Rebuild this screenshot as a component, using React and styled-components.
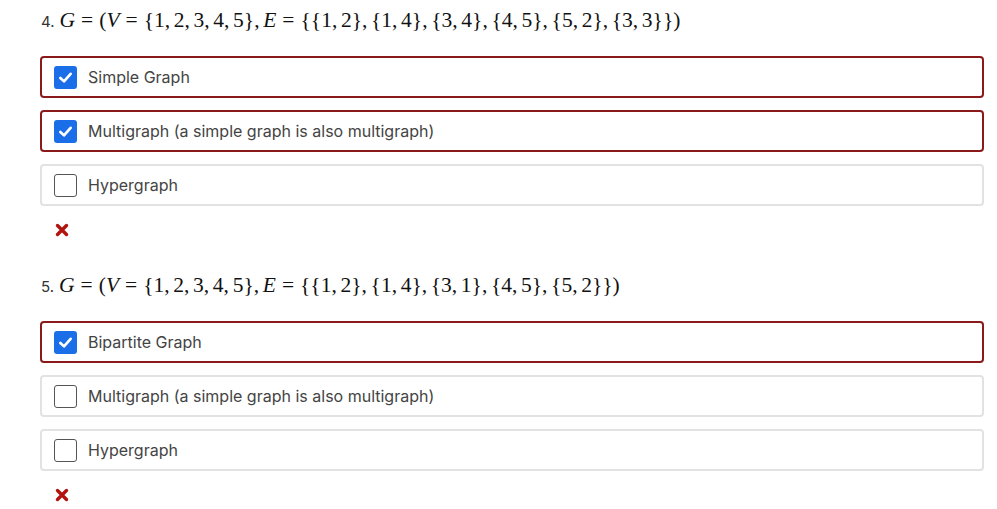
import React from 'react';
import styled, { createGlobalStyle } from 'styled-components';

const GlobalStyle = createGlobalStyle`
    body {
        margin: 0;
        background: #ffffff;
        font-family: 'Inter', 'Liberation Sans', sans-serif;
    }
`;

const questions = [
    {
        number: 4,
        edges: [[1, 2], [1, 4], [3, 4], [4, 5], [5, 2], [3, 3]],
        options: [
            { label: 'Simple Graph', checked: true },
            { label: 'Multigraph (a simple graph is also multigraph)', checked: true },
            { label: 'Hypergraph', checked: false },
        ],
    },
    {
        number: 5,
        edges: [[1, 2], [1, 4], [3, 1], [4, 5], [5, 2]],
        options: [
            { label: 'Bipartite Graph', checked: true },
            { label: 'Multigraph (a simple graph is also multigraph)', checked: false },
            { label: 'Hypergraph', checked: false },
        ],
    },
];

const Set = ({ items }) => (
    <>
        <Mo>{'{'}</Mo>
        {items.map((n, i) => (
            <React.Fragment key={i}>
                {n}
                {i < items.length - 1 && <Comma>,</Comma>}
            </React.Fragment>
        ))}
        <Mo>{'}'}</Mo>
    </>
);

const Formula = ({ edges }) => (
    <Math>
        <Mi>G</Mi>
        <Rel>=</Rel>
        (<Mi>V</Mi>
        <Rel>=</Rel>
        <Set items={[1, 2, 3, 4, 5]} />
        <Comma>,</Comma>
        <Mi>E</Mi>
        <Rel>=</Rel>
        {'{'}
        {edges.map((e, i) => (
            <React.Fragment key={i}>
                <Set items={e} />
                {i < edges.length - 1 && <Comma>,</Comma>}
            </React.Fragment>
        ))}
        {'}'})
    </Math>
);

const CheckIcon = () => (
    <svg width='15' height='15' viewBox='0 0 14 14'>
        <path d='M2.2 7.4 L5.6 10.6 L11.8 3.6' fill='none' stroke='#fff' strokeWidth='2.5' strokeLinecap='round' strokeLinejoin='round' />
    </svg>
);

const WrongIcon = () => (
    <svg width='14' height='14' viewBox='0 0 14 14'>
        <path d='M2.5 2.5 L11.5 11.5 M11.5 2.5 L2.5 11.5' stroke='#b3130f' strokeWidth='3.4' strokeLinecap='round' />
    </svg>
);

const App = () => {
    return (
        <Page>
            <GlobalStyle />
            {questions.map((q) => (
                <Question key={q.number}>
                    <Title>
                        <Num>{q.number}.</Num>
                        <Formula edges={q.edges} />
                    </Title>
                    <Options>
                        {q.options.map((o, i) => (
                            <Option key={i} $checked={o.checked}>
                                <Box $checked={o.checked}>{o.checked && <CheckIcon />}</Box>
                                <Label>{o.label}</Label>
                            </Option>
                        ))}
                    </Options>
                    <Feedback>
                        <WrongIcon />
                    </Feedback>
                </Question>
            ))}
        </Page>
    );
};

export default App;

const Page = styled.div`
    padding: 4px 13px 0 40px;
    width: 944px;
`;

const Question = styled.div`
    margin-bottom: 29px;
`;

const Title = styled.div`
    display: flex;
    align-items: baseline;
    height: 32px;
    line-height: 32px;
    margin-bottom: 20px;
    color: #222;
`;

const Num = styled.span`
    font-family: 'Inter', 'Liberation Sans', sans-serif;
    font-size: 15px;
    color: #333;
    margin-left: 1px;
    margin-right: 5px;
`;

const Math = styled.span`
    font-family: 'Liberation Serif', 'DejaVu Serif', serif;
    font-size: 21.5px;
    color: #111;
    white-space: nowrap;
`;

const Mi = styled.i`
    font-style: italic;
`;

const Mo = styled.span``;

const Rel = styled.span`
    margin: 0 0.28em;
`;

const Comma = styled.span`
    margin-right: 0.17em;
`;

const Options = styled.div`
    display: flex;
    flex-direction: column;
    gap: 12px;
`;

const Option = styled.div`
    display: flex;
    align-items: center;
    box-sizing: border-box;
    height: 42px;
    padding: 0 12px;
    border: 2px solid ${(p) => (p.$checked ? '#8a1a1a' : '#e2e2e2')};
    border-radius: 4px;
    background: #fff;
`;

const Box = styled.span`
    display: flex;
    align-items: center;
    justify-content: center;
    box-sizing: border-box;
    width: 23px;
    height: 23px;
    border-radius: 3px;
    background: ${(p) => (p.$checked ? '#1a6fe8' : '#fff')};
    border: ${(p) => (p.$checked ? 'none' : '1px solid #555')};
    margin-right: 11px;
`;

const Label = styled.span`
    font-size: 16px;
    color: #444;
`;

const Feedback = styled.div`
    display: flex;
    align-items: center;
    height: 20px;
    margin-top: 14px;
    padding-left: 15px;
`;
